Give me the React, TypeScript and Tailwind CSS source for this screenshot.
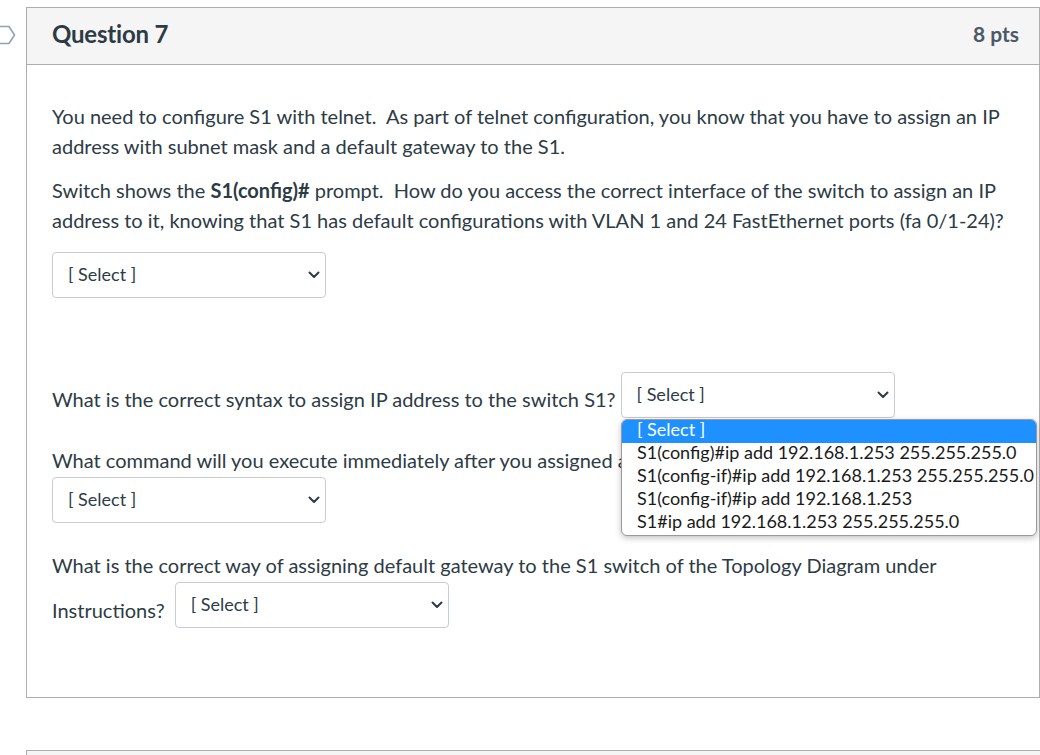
import React from "react";

const Chevron = () => (
  <svg width="12" height="8" viewBox="0 0 12 8" className="shrink-0">
    <path d="M1.5 1.5 L6 6 L10.5 1.5" fill="none" stroke="#2d3b45" strokeWidth="2" strokeLinecap="round" strokeLinejoin="round" />
  </svg>
);

function FakeSelect({ className = "" }: { className?: string }) {
  return (
    <div className={`flex h-[46px] w-[274px] shrink-0 items-center justify-between rounded-[4px] border border-[#c7cdd1] bg-white pl-[15px] pr-[5px] text-[18px] text-[#2d3b45] ${className}`}>
      <span className="-mt-[2px]">[ Select ]</span>
      <Chevron />
    </div>
  );
}

const OPTIONS = [
  "S1(config)#ip add 192.168.1.253 255.255.255.0",
  "S1(config-if)#ip add 192.168.1.253 255.255.255.0",
  "S1(config-if)#ip add 192.168.1.253",
  "S1#ip add 192.168.1.253 255.255.255.0",
];

export default function App() {
  return (
    <div className="relative h-[755px] w-[1040px] overflow-hidden bg-white text-[#2d3b45]" style={{ fontFamily: "Lato, 'Open Sans', sans-serif" }}>
      {/* question nav flag */}
      <svg width="16" height="20" viewBox="0 0 16 20" className="absolute left-0 top-[25px]">
        <path d="M-6 1.5 H9 L14.5 10 L9 18.5 H-6 Z" fill="white" stroke="#8aa3b8" strokeWidth="1.5" strokeLinejoin="round" />
      </svg>

      <div className="pl-[26px] pt-[7px]">
        <div className="w-[1014px] border border-[#adadad]">
          <div className="flex h-[57px] items-center justify-between border-b border-[#adadad] bg-[#f5f5f5] pb-[4px] pl-[25px] pr-[20px]">
            <h2 className="text-[24px] font-bold tracking-[-0.2px] text-[#2d3b45]">Question 7</h2>
            <span className="text-[21px] font-bold text-[#4b5a66]">8 pts</span>
          </div>

          <div className="relative h-[632px] pl-[25px] pr-[20px] pt-[36px] text-[20px] leading-[30px]">
            <p>
              You need to configure S1 with telnet.&nbsp; As part of telnet configuration, you know that you have to assign an IP address with subnet mask and a default gateway to the S1.
            </p>
            <p className="mt-[14px]">
              Switch shows the <b>S1(config)#</b> prompt.&nbsp; How do you access the correct interface of the switch to assign an IP address to it, knowing that S1 has default configurations with VLAN 1 and 24 FastEthernet ports (fa 0/1-24)?
            </p>
            <FakeSelect className="mt-[17px]" />

            <div className="mt-[74px] flex items-end gap-[5px]">
              <span className="mb-[4px]">What is the correct syntax to assign IP address to the switch S1?</span>
              <FakeSelect />
            </div>

            <p className="mt-[27px] whitespace-nowrap">What command will you execute immediately after you assigned an IP address to the VLAN 1 interface?</p>
            <FakeSelect className="mt-[2px]" />

            <p className="mt-[27px]">What is the correct way of assigning default gateway to the S1 switch of the Topology Diagram under</p>
            <div className="mt-[2px] flex items-end gap-[10px]">
              <span className="mb-[3px]">Instructions?</span>
              <FakeSelect />
            </div>

            {/* open dropdown list */}
            <div className="absolute left-[594px] top-[354px] w-[416px] overflow-hidden rounded-[6px] border border-[#9a9a9a] bg-white text-[18px] leading-[23px] text-[#1a1a1a] shadow-[0_2px_6px_rgba(0,0,0,0.25)]">
              <div className="bg-[#1e90ff] pl-[15px] text-white">
                <span className="relative -top-[2px]">[ Select ]</span>
              </div>
              {OPTIONS.map((o) => (
                <div key={o} className="whitespace-nowrap pl-[15px]">
                  <span className="relative -top-[2px]">{o}</span>
                </div>
              ))}
            </div>
          </div>
        </div>

        <div className="mt-[52px] h-[40px] w-[1014px] border-l border-t border-[#adadad] bg-[#f5f5f5]" />
      </div>
    </div>
  );
}
